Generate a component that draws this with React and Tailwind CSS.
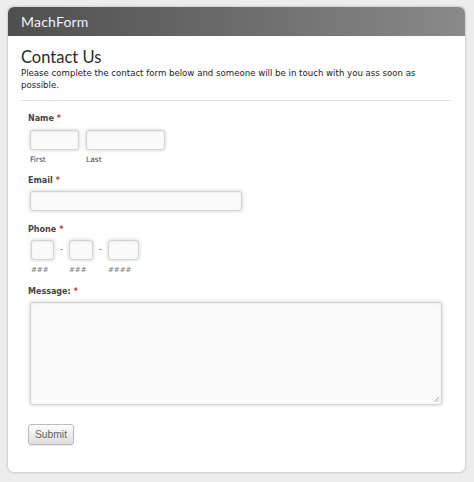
import React from "react";

const body = { fontFamily: '"DejaVu Sans", "Liberation Sans", sans-serif' };

function Req() {
  return <span className="text-[#c0392b] ml-[3px]">*</span>;
}

const inputCls =
  "block h-[20px] rounded-[3px] border border-[#d4d4d4] bg-[#fafafa] shadow-[0_0_3px_1px_rgba(0,0,0,0.12),inset_0_1px_2px_rgba(0,0,0,0.06)]";

export default function App() {
  return (
    <div className="w-[474px] h-[482px] bg-[#ededed] pt-[6px] pl-[7px]" style={body}>
      <div className="w-[459px] h-[467px] rounded-[7px] bg-white border border-[#d6d6d6] shadow-[0_0_2px_rgba(0,0,0,0.15)] overflow-hidden">
        <div className="h-[29px] bg-gradient-to-r from-[#4f4f4f] to-[#8a8a8a] flex items-center pl-[13px]">
          <span className="text-[14px] text-[#f2f2f2] tracking-[0.2px]" style={{ fontFamily: 'Lato, "Open Sans", sans-serif' }}>
            MachForm
          </span>
        </div>
        <div className="px-[13px]">
          <div className="mt-[12px] h-[19px] leading-[19px] text-[16.5px] text-[#2a2a2a]" style={{ fontFamily: 'Lato, "Open Sans", sans-serif' }}>
            Contact Us
          </div>
          <div className="text-[8.6px] leading-[12px] text-[#222]">
            Please complete the contact form below and someone will be in touch with you ass soon as possible.
          </div>
          <div className="mt-[9px] h-px bg-[#e2e2e2] mr-[1px]" />
          <div className="pl-[7px]">
            <div className="mt-[12px] h-[12px] leading-[12px] text-[8px] font-bold text-[#444]">
              Name<Req />
            </div>
            <div className="mt-[5px] flex gap-[7px] pl-[2px]">
              <div>
                <div className={inputCls + " w-[49px]"} />
                <div className="mt-[4px] h-[12px] leading-[12px] text-[7.5px] text-[#444]">First</div>
              </div>
              <div>
                <div className={inputCls + " w-[79px]"} />
                <div className="mt-[4px] h-[12px] leading-[12px] text-[7.5px] text-[#444]">Last</div>
              </div>
            </div>
            <div className="mt-[9px] h-[12px] leading-[12px] text-[8px] font-bold text-[#444]">
              Email<Req />
            </div>
            <div className="mt-[4px] pl-[2px]">
              <div className={inputCls + " w-[212px]"} />
            </div>
            <div className="mt-[13px] h-[12px] leading-[12px] text-[8px] font-bold text-[#444]">
              Phone<Req />
            </div>
            <div className="mt-[4px] pl-[3px] flex items-start">
              <div>
                <div className={inputCls + " w-[23px]"} />
                <div className="mt-[4px] h-[12px] leading-[12px] text-[7px] italic text-[#777]">###</div>
              </div>
              <div className="w-[15px] h-[20px] leading-[20px] text-center text-[8px] text-[#555]">-</div>
              <div>
                <div className={inputCls + " w-[24px]"} />
                <div className="mt-[4px] h-[12px] leading-[12px] text-[7px] italic text-[#777]">###</div>
              </div>
              <div className="w-[15px] h-[20px] leading-[20px] text-center text-[8px] text-[#555]">-</div>
              <div>
                <div className={inputCls + " w-[31px]"} />
                <div className="mt-[4px] h-[12px] leading-[12px] text-[7px] italic text-[#777]">####</div>
              </div>
            </div>
            <div className="mt-[10px] h-[12px] leading-[12px] text-[8px] font-bold text-[#444]">
              Message:<Req />
            </div>
            <div className="mt-[4px] pl-[2px]">
              <div className="relative w-[412px] h-[103px] rounded-[3px] border border-[#d4d4d4] bg-[#fafafa] shadow-[0_0_3px_1px_rgba(0,0,0,0.12),inset_0_1px_2px_rgba(0,0,0,0.06)]">
                <svg className="absolute right-[1px] bottom-[1px]" width="7" height="7" viewBox="0 0 7 7">
                  <path d="M6 1 L1 6 M6 3.5 L3.5 6" stroke="#999" strokeWidth="0.8" />
                </svg>
              </div>
            </div>
            <div className="mt-[19px] flex">
              <button
                className="block w-[46px] h-[21px] rounded-[3px] border border-[#bdbdbd] bg-gradient-to-b from-[#fdfdfd] to-[#dedede] text-[10.3px] leading-[19px] text-[#666] shadow-[0_1px_1px_rgba(0,0,0,0.1)]"
                style={{ fontFamily: '"Liberation Sans", Arial, sans-serif' }}
              >
                Submit
              </button>
            </div>
          </div>
        </div>
      </div>
    </div>
  );
}
